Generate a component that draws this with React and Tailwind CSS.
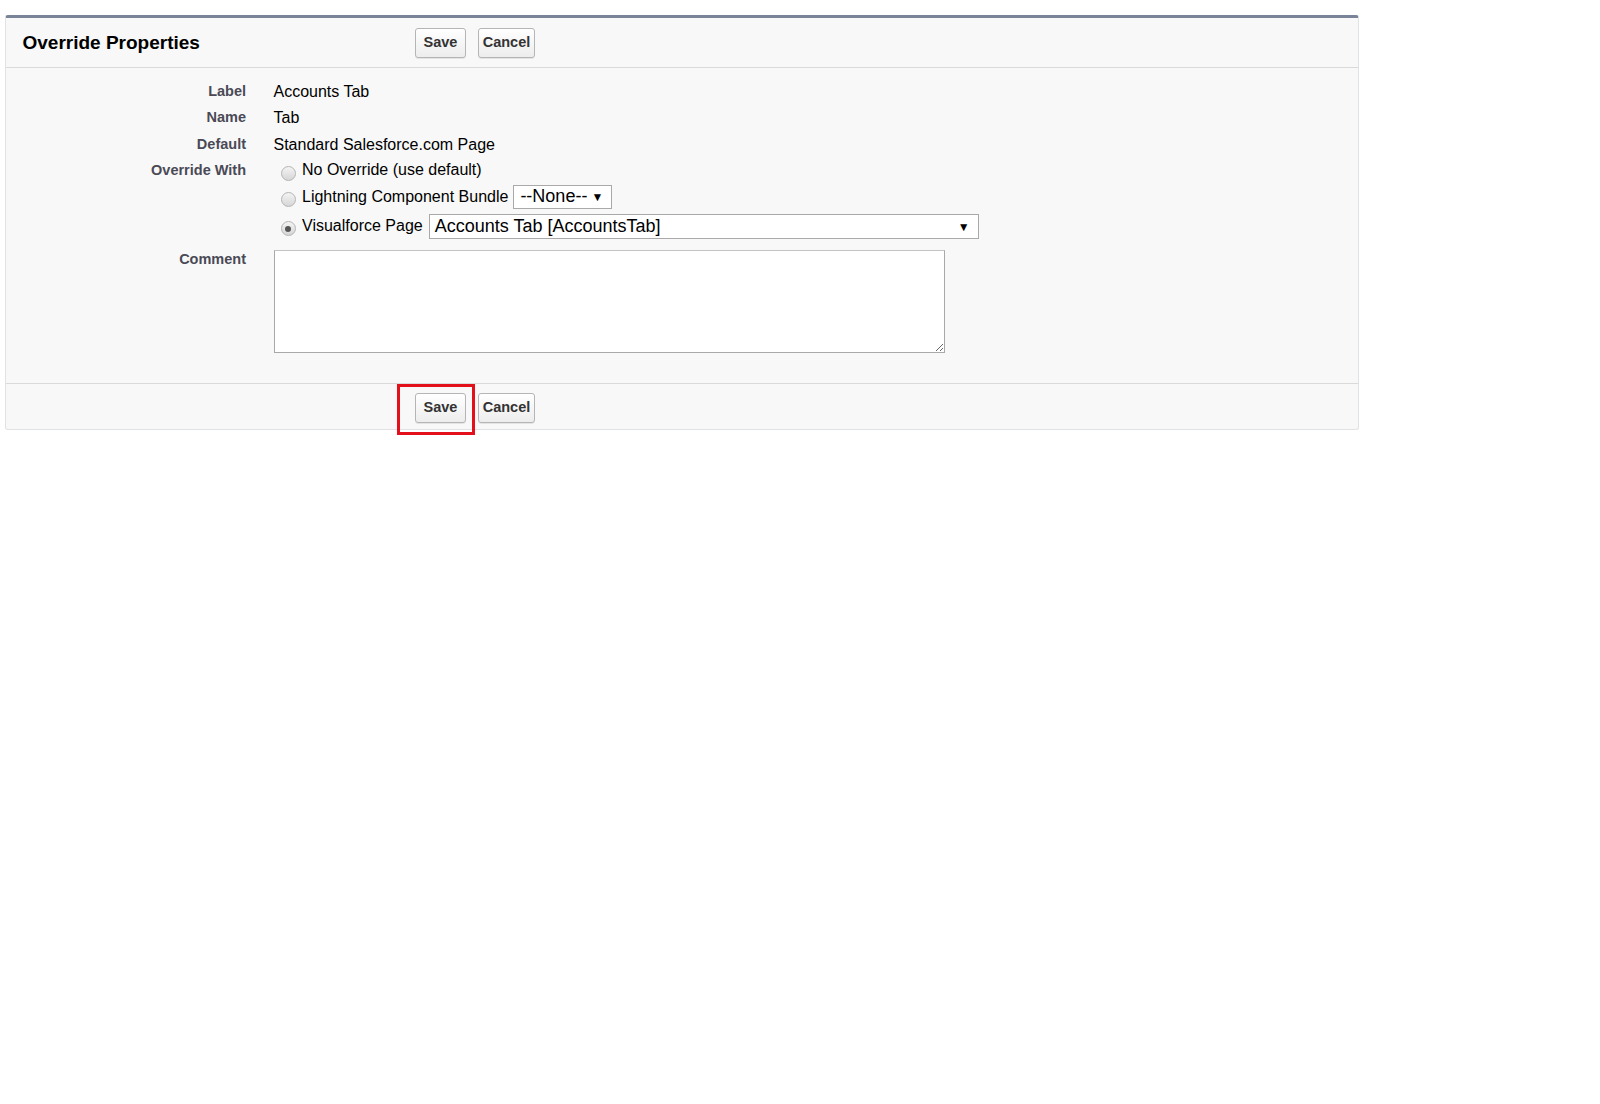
import React from "react";

const font = { fontFamily: '"Liberation Sans", Arial, sans-serif' };

function Btn({ children, w }) {
  return (
    <button
      type="button"
      className={`h-[30px] ${w} rounded-[3px] border border-[#b5b5b5] bg-gradient-to-b from-white to-[#ededed] text-[14.5px] font-bold text-[#333] shadow-[0_1px_0_rgba(0,0,0,0.08)] flex items-center justify-center`}
    >
      {children}
    </button>
  );
}

function Radio({ checked, mt }) {
  return (
    <span className={`${mt} inline-flex h-[15px] w-[15px] shrink-0 items-center justify-center rounded-full border border-[#b4b4b4] bg-gradient-to-b from-[#f4f4f4] to-[#d6d6d6]`}>
      {checked && <span className="h-[6px] w-[6px] rounded-full bg-[#555]" />}
    </span>
  );
}

function Row({ label, children }) {
  return (
    <div className="flex h-[26.5px] items-center">
      <div className="w-[240px] shrink-0 text-right text-[14.5px] font-bold text-[#4a4a56]">{label}</div>
      <div className="ml-[27.5px] text-[16px] text-black">{children}</div>
    </div>
  );
}

export default function App() {
  return (
    <div className="min-h-[1104px] bg-white pt-[15px] pl-[5px]" style={font}>
      <div className="w-[1354px] rounded-[3px] border-x border-b border-[#e0e3e5] border-t-[3px] border-t-[#7a8499] bg-[#f8f8f8]">
        {/* header */}
        <div className="flex h-[50px] items-center border-b border-[#dadada]">
          <div className="mt-[2px] w-[409px] shrink-0 pl-[16.5px] text-[19px] font-bold text-black">Override Properties</div>
          <div className="flex gap-[12px]">
            <Btn w="w-[51px]">Save</Btn>
            <Btn w="w-[57px]">Cancel</Btn>
          </div>
        </div>

        {/* body */}
        <div className="pt-[10.5px] pb-[30px]">
          <Row label="Label">Accounts Tab</Row>
          <Row label="Name">Tab</Row>
          <Row label="Default">Standard Salesforce.com Page</Row>

          <div className="-mt-[2px] flex">
            <div className="w-[240px] shrink-0 pt-[4px] text-right text-[14.5px] font-bold text-[#4a4a56]">Override With</div>
            <div className="ml-[27.5px] flex flex-col text-[16px] text-black">
              <div className="flex h-[26.5px] items-start pl-[7px]">
                <Radio mt="mt-[9.5px]" />
                <span className="ml-[6.5px] mt-[2px]">No Override (use default)</span>
              </div>
              <div className="flex h-[28.5px] items-start pl-[7px]">
                <Radio mt="mt-[9px]" />
                <span className="ml-[6.5px] mt-[2px]">Lightning Component Bundle</span>
                <div className="ml-[5px] mt-[2px] flex h-[24px] w-[99px] items-center justify-between border border-[#a9a9a9] bg-white pl-[6px] pr-[8px] text-[18px]">
                  <span>--None--</span>
                  <span className="text-[12px]">▼</span>
                </div>
              </div>
              <div className="flex h-[30px] items-start pl-[7px]">
                <Radio checked mt="mt-[10px]" />
                <span className="ml-[6.5px] mt-[3px]">Visualforce Page</span>
                <div className="ml-[6px] mt-[3px] flex h-[25px] w-[550px] items-center justify-between border border-[#a9a9a9] bg-white pl-[5px] pr-[8px] text-[18px]">
                  <span>Accounts Tab [AccountsTab]</span>
                  <span className="text-[12px]">▼</span>
                </div>
              </div>
            </div>
          </div>

          <div className="mt-[9px] flex">
            <div className="-mt-[1px] w-[240px] shrink-0 text-right text-[14.5px] font-bold text-[#4a4a56]">Comment</div>
            <div className="ml-[27.5px]">
              <textarea className="block h-[103px] w-[671px] resize border border-[#a9a9a9] border-t-[#c4c4c4] bg-white outline-none" />
            </div>
          </div>
        </div>

        {/* footer */}
        <div className="flex h-[46px] items-start border-t border-[#dadada] pt-[8.5px]">
          <div className="w-[409px] shrink-0" />
          <div className="flex gap-[12px]">
            <div className="relative">
              <Btn w="w-[51px]">Save</Btn>
              <div className="pointer-events-none absolute -left-[18px] -top-[8.5px] h-[51px] w-[78px] border-[3px] border-[#e3101b]" />
            </div>
            <Btn w="w-[57px]">Cancel</Btn>
          </div>
        </div>
      </div>
    </div>
  );
}
